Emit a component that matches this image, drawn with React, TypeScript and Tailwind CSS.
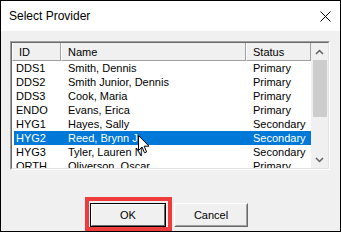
import React from "react";

const rows = [
  { id: "DDS1", name: "Smith, Dennis", status: "Primary" },
  { id: "DDS2", name: "Smith Junior, Dennis", status: "Primary" },
  { id: "DDS3", name: "Cook, Maria", status: "Primary" },
  { id: "ENDO", name: "Evans, Erica", status: "Primary" },
  { id: "HYG1", name: "Hayes, Sally", status: "Secondary" },
  { id: "HYG2", name: "Reed, Brynn J", status: "Secondary", selected: true },
  { id: "HYG3", name: "Tyler, Lauren N", status: "Secondary" },
  { id: "ORTH", name: "Oliverson, Oscar", status: "Primary" },
];

function HeaderCell({ label, w }: { label: string; w: string }) {
  return (
    <div
      className={`${w} h-[18px] shrink-0 flex items-center pl-[6px] border-l border-l-white border-r border-r-[#a0a0a0] border-b border-b-[#a0a0a0] bg-[#f0f0f0]`}
    >
      {label}
    </div>
  );
}

function Cursor() {
  return (
    <svg
      className="absolute left-[137px] top-[134px]"
      width="12"
      height="19"
      viewBox="0 0 12 19"
    >
      <path
        d="M0.5 0.5 L0.5 15.5 L4 12 L6.5 17.8 L8.6 16.9 L6.2 11.2 L11 11.2 Z"
        fill="white"
        stroke="black"
        strokeWidth="1"
      />
    </svg>
  );
}

export default function App() {
  return (
    <div
      className="relative w-[341px] h-[232px] border border-black bg-[#f0f0f0] flex flex-col text-black"
      style={{ fontFamily: '"Liberation Sans", Arial, sans-serif' }}
    >
      <div className="h-[30px] bg-white flex items-center justify-between pl-[8px] pr-[9px] text-[12px]">
        <span>Select Provider</span>
        <svg width="11" height="11" viewBox="0 0 11 11">
          <path d="M0.5 0.5 L10.5 10.5 M10.5 0.5 L0.5 10.5" stroke="black" strokeWidth="1" />
        </svg>
      </div>

      <div className="pl-[9px] pt-[10px]">
        <div className="w-[320px] h-[129px] border border-t-[#a0a0a0] border-l-[#a0a0a0] border-r-white border-b-white">
          <div className="w-full h-full border border-t-[#696969] border-l-[#696969] border-r-[#e3e3e3] border-b-[#e3e3e3] bg-white flex overflow-hidden">
            <div className="flex-1 flex flex-col text-[11px] leading-[14px] overflow-hidden">
              <div className="flex">
                <HeaderCell label="ID" w="w-[49px]" />
                <HeaderCell label="Name" w="w-[185px]" />
                <HeaderCell label="Status" w="w-[65px]" />
              </div>
              {rows.map((r) => (
                <div
                  key={r.id}
                  className={`flex h-[14px] shrink-0 ml-[2px] ${
                    r.selected ? "bg-[#0078d7] text-white" : ""
                  }`}
                >
                  <div className="w-[47px] pl-[2px]">{r.id}</div>
                  <div className="w-[185px] pl-[7px] whitespace-nowrap">{r.name}</div>
                  <div className="w-[65px] pl-[7px]">{r.status}</div>
                </div>
              ))}
            </div>
            <div className="w-[17px] bg-[#f0f0f0] flex flex-col items-center">
              <div className="h-[17px] flex items-center justify-center">
                <svg width="9" height="6" viewBox="0 0 9 6">
                  <path d="M1 5 L4.5 1.5 L8 5" stroke="#606060" strokeWidth="1.5" fill="none" />
                </svg>
              </div>
              <div className="w-[14px] h-[57px] bg-[#cdcdcd]" />
              <div className="flex-1" />
              <div className="h-[17px] flex items-center justify-center">
                <svg width="9" height="6" viewBox="0 0 9 6">
                  <path d="M1 1 L4.5 4.5 L8 1" stroke="#606060" strokeWidth="1.5" fill="none" />
                </svg>
              </div>
            </div>
          </div>
        </div>
      </div>

      <div className="flex gap-[8px] pl-[89px] mt-[33px] text-[11px]">
        <button className="w-[76px] h-[24px] border border-black bg-[#f0f0f0] flex">
          <span className="flex-1 flex items-center justify-center border border-t-white border-l-white border-r-[#696969] border-b-[#696969]">
            OK
          </span>
        </button>
        <button className="w-[74px] h-[24px] bg-[#f0f0f0] border border-t-white border-l-white border-r-[#696969] border-b-[#696969] flex">
          <span className="flex-1 flex items-center justify-center border border-transparent border-r-[#a0a0a0] border-b-[#a0a0a0]">
            Cancel
          </span>
        </button>
      </div>

      <div className="absolute left-[84px] top-[196px] w-[87px] h-[34px] border-[4px] border-[#ee3b3b]" />
      <Cursor />
    </div>
  );
}
